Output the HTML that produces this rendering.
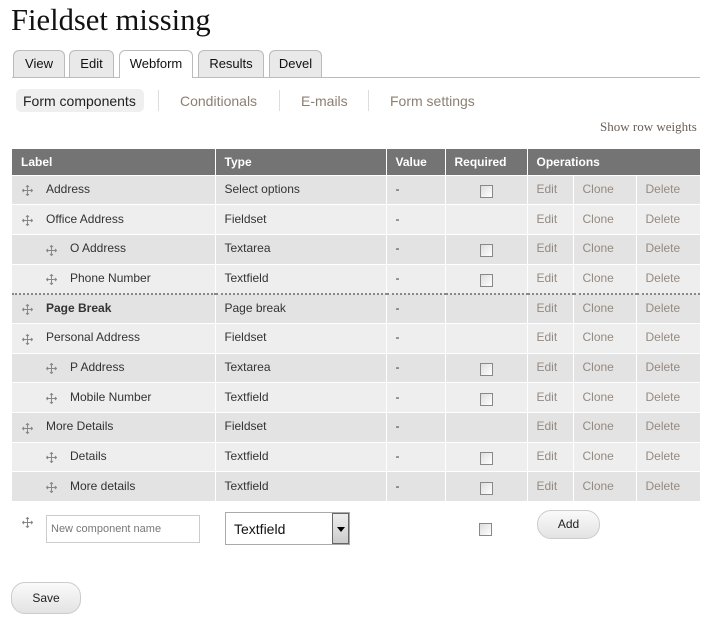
<!DOCTYPE html>
<html><head><meta charset="utf-8"><style>
*{box-sizing:border-box;margin:0;padding:0}
body{width:720px;height:642px;background:#fff;font-family:"Liberation Sans",sans-serif;position:relative;overflow:hidden;color:#333}
.abs{position:absolute}
h1{position:absolute;left:11px;top:3px;font:400 30.6px "Liberation Serif",serif;color:#111;white-space:nowrap}
.tab{position:absolute;top:50px;height:27px;border:1px solid #bbb;border-bottom:none;border-radius:6px 6px 0 0;background:#e9e9e9;font-size:13px;color:#111;text-align:center;line-height:26px}
.tab.on{background:#fff;height:28px}
.sub{position:absolute;top:93px;font-size:14px;color:#8c7f72}
.sep{position:absolute;top:90px;width:1px;height:21px;background:#ddd}
table{position:absolute;left:12px;top:149px;width:688px;border-collapse:collapse;font-size:12px}
th{background:#747474;color:#fff;text-align:left;font-weight:bold;height:26px;padding:0 0 0 9px;border-left:1px solid #fff;border-bottom:1px solid #fff}
th:first-child{border-left:none}
td{height:29.7px;border-left:1px solid #fff;border-bottom:1px solid #fff;padding:0 0 2px 9px;color:#333;vertical-align:middle}
td:first-child{border-left:none;padding-left:10px}
tr.d td{background:#e3e3e3}
tr.l td{background:#eeeeee}
tr.br td{border-top:2px dotted #888}
td.o{color:#958a80}
.dr{display:inline-block;width:11px;height:11px;vertical-align:middle;margin-right:13px;position:relative;top:1px}
td.ind{padding-left:34px}
.cb{display:inline-block;width:13px;height:13px;border:1px solid #888;background:linear-gradient(135deg,#ddd,#fff);vertical-align:middle;margin-left:25px;position:relative;top:2px}
.btn{position:absolute;border:1px solid #ccc;border-radius:14px;background:linear-gradient(#fafafa,#e3e3e3);font-size:12px;color:#222;text-align:center}
</style></head><body>
<h1>Fieldset missing</h1>
<div class="abs" style="left:12px;top:77px;width:688px;height:1px;background:#bbb"></div>
<div class="tab" style="left:13px;width:52px">View</div>
<div class="tab" style="left:69px;width:45px">Edit</div>
<div class="tab on" style="left:119px;width:74px">Webform</div>
<div class="tab" style="left:198px;width:66px">Results</div>
<div class="tab" style="left:269px;width:53px">Devel</div>
<div class="abs" style="left:16px;top:89px;width:128px;height:23px;background:#efefef;border-radius:5px"></div>
<div class="sub" style="left:23px;color:#222">Form components</div>
<div class="sep" style="left:158px"></div>
<div class="sub" style="left:180px">Conditionals</div>
<div class="sep" style="left:279px"></div>
<div class="sub" style="left:301px">E-mails</div>
<div class="sep" style="left:368px"></div>
<div class="sub" style="left:390px">Form settings</div>
<div class="abs" style="left:600px;top:119px;font:13px 'Liberation Serif',serif;color:#6b5f55">Show row weights</div>
<svg width="0" height="0" style="position:absolute"><defs><g id="dr" stroke="#888" stroke-width="1" fill="none"><path d="M5.5 0.5V10.5M0.5 5.5H10.5M4 2L5.5 0.5 7 2M4 9L5.5 10.5 7 9M2 4L0.5 5.5 2 7M9 4L10.5 5.5 9 7"/></g></defs></svg>
<table>
<tr><th style="width:203px">Label</th><th style="width:171px">Type</th><th style="width:59px">Value</th><th style="width:82px">Required</th><th colspan="3">Operations</th></tr>
<tr class="d"><td><svg class="dr"><use href="#dr"/></svg>Address</td><td>Select options</td><td>-</td><td><span class="cb"></span></td><td class="o" style="width:46px">Edit</td><td class="o" style="width:63px">Clone</td><td class="o">Delete</td></tr>
<tr class="l"><td><svg class="dr"><use href="#dr"/></svg>Office Address</td><td>Fieldset</td><td>-</td><td></td><td class="o">Edit</td><td class="o">Clone</td><td class="o">Delete</td></tr>
<tr class="d"><td class="ind"><svg class="dr"><use href="#dr"/></svg>O Address</td><td>Textarea</td><td>-</td><td><span class="cb"></span></td><td class="o">Edit</td><td class="o">Clone</td><td class="o">Delete</td></tr>
<tr class="l"><td class="ind"><svg class="dr"><use href="#dr"/></svg>Phone Number</td><td>Textfield</td><td>-</td><td><span class="cb"></span></td><td class="o">Edit</td><td class="o">Clone</td><td class="o">Delete</td></tr>
<tr class="d br"><td><svg class="dr"><use href="#dr"/></svg><b>Page Break</b></td><td>Page break</td><td>-</td><td></td><td class="o">Edit</td><td class="o">Clone</td><td class="o">Delete</td></tr>
<tr class="l"><td><svg class="dr"><use href="#dr"/></svg>Personal Address</td><td>Fieldset</td><td>-</td><td></td><td class="o">Edit</td><td class="o">Clone</td><td class="o">Delete</td></tr>
<tr class="d"><td class="ind"><svg class="dr"><use href="#dr"/></svg>P Address</td><td>Textarea</td><td>-</td><td><span class="cb"></span></td><td class="o">Edit</td><td class="o">Clone</td><td class="o">Delete</td></tr>
<tr class="l"><td class="ind"><svg class="dr"><use href="#dr"/></svg>Mobile Number</td><td>Textfield</td><td>-</td><td><span class="cb"></span></td><td class="o">Edit</td><td class="o">Clone</td><td class="o">Delete</td></tr>
<tr class="d"><td><svg class="dr"><use href="#dr"/></svg>More Details</td><td>Fieldset</td><td>-</td><td></td><td class="o">Edit</td><td class="o">Clone</td><td class="o">Delete</td></tr>
<tr class="l"><td class="ind"><svg class="dr"><use href="#dr"/></svg>Details</td><td>Textfield</td><td>-</td><td><span class="cb"></span></td><td class="o">Edit</td><td class="o">Clone</td><td class="o">Delete</td></tr>
<tr class="d"><td class="ind"><svg class="dr"><use href="#dr"/></svg>More details</td><td>Textfield</td><td>-</td><td><span class="cb"></span></td><td class="o">Edit</td><td class="o">Clone</td><td class="o">Delete</td></tr>
</table>
<svg class="abs" style="left:22px;top:517px" width="11" height="11"><use href="#dr"/></svg>
<div class="abs" style="left:46px;top:515px;width:154px;height:28px;border:1px solid #ccc;font-size:11px;color:#777;padding:7px 0 0 4px">New component name</div>
<div class="abs" style="left:225px;top:512px;width:125px;height:33px;border:1px solid #aaa;font-size:14px;color:#111;padding:8px 0 0 8px">Textfield</div>
<div class="abs" style="left:332px;top:513px;width:17px;height:31px;border:1px solid #666;background:linear-gradient(#eee,#ccc)"><div style="position:absolute;left:4px;top:13px;border:4px solid transparent;border-top:5px solid #000;border-bottom:none"></div></div>
<span class="abs" style="left:479px;top:523px;width:13px;height:13px;border:1px solid #888;background:linear-gradient(135deg,#ddd,#fff)"></span>
<div class="btn" style="left:537px;top:510px;width:63px;height:29px;line-height:27px">Add</div>
<div class="btn" style="left:11px;top:582px;width:70px;height:32px;line-height:30px">Save</div>
</body></html>
